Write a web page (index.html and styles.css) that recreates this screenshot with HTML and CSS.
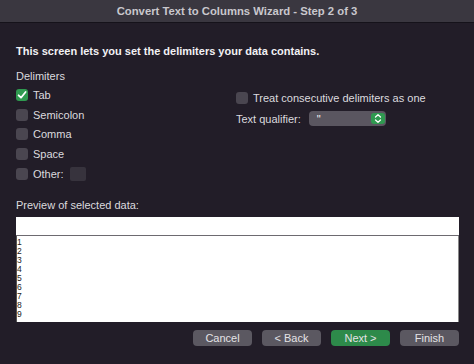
FILE: index.html
```html
<!DOCTYPE html>
<html lang="en">
<head>
  <meta charset="UTF-8" />
  <title>Convert Text to Columns Wizard - Step 2 of 3</title>
  <link rel="stylesheet" href="styles.css">
</head>
<body>

<header class="titlebar">Convert Text to Columns Wizard - Step 2 of 3</header>

<main class="content">
  <p class="intro">This screen lets you set the delimiters your data contains.</p>
  <p class="group-label">Delimiters</p>

  <div class="options">
    <div class="col-left">
      <label class="check-row">
        <span class="box checked">
          <svg width="12" height="12" viewBox="0 0 12 12"><path d="M2.6 6.3 L5 8.7 L9.6 3" fill="none" stroke="#fff" stroke-width="1.8" stroke-linecap="round" stroke-linejoin="round"/></svg>
        </span>
        Tab
      </label>
      <label class="check-row"><span class="box"></span>Semicolon</label>
      <label class="check-row"><span class="box"></span>Comma</label>
      <label class="check-row"><span class="box"></span>Space</label>
      <label class="check-row"><span class="box"></span>Other: <span class="other-input"></span></label>
    </div>
    <div class="col-right">
      <label class="check-row"><span class="box"></span>Treat consecutive delimiters as one</label>
      <div class="qualifier-row">
        <span>Text qualifier:</span>
        <div class="select">
          <span class="select-value">"</span>
          <span class="stepper">
            <svg width="14" height="11" viewBox="0 0 14 11"><path d="M4.5 4 L7 1.8 L9.5 4 M4.5 7 L7 9.2 L9.5 7" fill="none" stroke="#fff" stroke-width="1.3" stroke-linecap="round" stroke-linejoin="round"/></svg>
          </span>
        </div>
      </div>
    </div>
  </div>

  <p class="group-label preview-label">Preview of selected data:</p>
  <div class="preview-head"></div>
  <div class="preview-body">
    <div>1</div><div>2</div><div>3</div><div>4</div><div>5</div><div>6</div><div>7</div><div>8</div><div>9</div>
  </div>

  <div class="buttons">
    <button class="btn">Cancel</button>
    <button class="btn">&lt; Back</button>
    <button class="btn primary">Next &gt;</button>
    <button class="btn">Finish</button>
  </div>
</main>

</body>
</html>
```

FILE: styles.css
```css
body {
  margin: 0;
  width: 474px;
  height: 364px;
  overflow: hidden;
  background: #221d28;
  color: #dcdadf;
  font-family: "Liberation Sans", Arial, sans-serif;
  font-size: 11px;
}
.titlebar {
  height: 22px;
  line-height: 22px;
  background: #3a3740;
  border-bottom: 1px solid #15121a;
  color: #c9c7cd;
  font-size: 11.3px;
  font-weight: bold;
  text-align: center;
}
.content {
  padding: 0 15px 0 16px;
}
p {
  margin: 0;
  line-height: 14px;
}
.intro {
  margin-top: 21px;
  color: #f2f1f4;
  font-size: 11px;
  font-weight: bold;
}
.group-label {
  margin-top: 11px;
}
.options {
  display: flex;
  margin-top: 2px;
}
.col-left {
  width: 220px;
}
.col-right {
  padding-top: 3px;
}
.check-row {
  display: flex;
  align-items: center;
  gap: 5px;
  height: 19.75px;
}
.box {
  width: 12px;
  height: 12px;
  border-radius: 3px;
  background: #4a4650;
  flex: none;
}
.box.checked {
  background: #2f9a50;
}
.box svg {
  display: block;
}
.other-input {
  width: 16px;
  height: 14px;
  margin-left: 1px;
  background: #37333d;
  border-radius: 2px;
}
.qualifier-row {
  display: flex;
  align-items: center;
  gap: 8px;
  height: 22px;
}
.select {
  display: flex;
  align-items: center;
  justify-content: space-between;
  width: 77px;
  height: 15px;
  padding: 0 1px 0 8px;
  box-sizing: border-box;
  background: #5a5660;
  border-radius: 4px;
  color: #f0eff2;
}
.stepper {
  width: 14px;
  height: 11px;
  background: #2f9a50;
  border-radius: 3px;
}
.stepper svg {
  display: block;
}
.preview-label {
  margin-top: 14px;
}
.preview-head {
  margin-top: 5px;
  height: 18px;
  background: #fff;
  border-bottom: 1px solid #6d6a70;
}
.preview-body {
  height: 84px;
  padding-top: 2px;
  background: #fff;
  border-left: 1px solid #555;
  border-right: 1px solid #888;
  color: #222;
  font-size: 8.5px;
  line-height: 9px;
}
.buttons {
  display: flex;
  justify-content: flex-end;
  gap: 10px;
  margin-top: 8px;
}
.btn {
  width: 59px;
  height: 16px;
  padding: 0;
  border: none;
  border-radius: 4px;
  background: #5b5861;
  color: #e4e3e6;
  font-family: inherit;
  font-size: 11px;
}
.btn.primary {
  background: #2d8a4a;
}
```
